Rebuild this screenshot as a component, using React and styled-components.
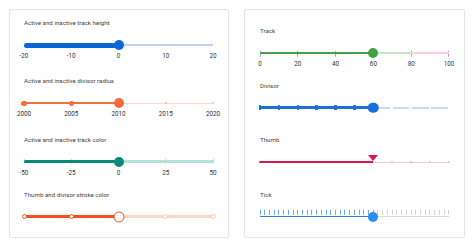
import React from 'react';
import styled, { createGlobalStyle } from 'styled-components';

const Global = createGlobalStyle`
  html, body { margin: 0; padding: 0; background: #fff; }
  body { font-family: Roboto, "Noto Sans", sans-serif; }
`;

const Page = styled.div`
  display: flex;
  gap: 15px;
  padding: 9px;
  width: 474px;
  height: 248px;
  box-sizing: border-box;
`;

const Card = styled.div`
  box-sizing: border-box;
  width: ${p => p.$w}px;
  height: 229px;
  border: 1px solid #e4e4e4;
  border-radius: 2px;
  background: #fff;
  padding: ${p => p.$pt}px 15px 0 ${p => p.$pl}px;
  display: flex;
  flex-direction: column;
`;

const Section = styled.section`
  flex: none;
  height: ${p => (p.$h ? `${p.$h}px` : 'auto')};
  display: flex;
  flex-direction: column;
`;

const Title = styled.div`
  height: 10px;
  line-height: 10px;
  font-size: 6.2px;
  color: #444;
  white-space: nowrap;
`;

/* The slider rail: tracks laid out in a flex row */
const Rail = styled.div`
  position: relative;
  isolation: isolate;
  height: 18px;
  margin-top: 8px;
  display: flex;
  align-items: center;
`;

const ActiveTrack = styled.div`
  flex: 0 0 ${p => p.$pct}%;
  height: ${p => p.$h}px;
  background: ${p => p.$color};
  border-radius: ${p => (p.$round ? `${p.$h / 2}px 0 0 ${p.$h / 2}px` : '0')};
`;

const InactiveTrack = styled.div`
  flex: 1 1 0;
  height: ${p => p.$h}px;
  background: ${p => p.$color || 'transparent'};
  display: flex;
  gap: ${p => p.$gap || 0}px;
  padding-right: ${p => p.$endGap || 0}px;
`;

const Segment = styled.div`
  flex: 1 1 0;
  background: ${p => p.$color};
`;

/* Row of marks (divisors / ticks) spread evenly over the rail */
const MarkRow = styled.div`
  position: absolute;
  inset: 0;
  z-index: ${p => (p.$behind ? -1 : 0)};
  display: flex;
  justify-content: space-between;
  align-items: center;
`;

const Mark = styled.span`
  width: 0;
  display: flex;
  justify-content: center;
  align-items: center;
`;

const Dot = styled.span`
  flex: none;
  width: ${p => p.$size}px;
  height: ${p => p.$size}px;
  box-sizing: border-box;
  border-radius: 50%;
  background: ${p => p.$color};
  border: ${p => (p.$ring ? `1.2px solid ${p.$ring}` : 'none')};
`;

const Pip = styled.span`
  flex: none;
  width: 2.5px;
  height: 5px;
  border-radius: 0.6px;
  background: ${p => p.$color};
`;

const Notch = styled.span`
  flex: none;
  width: 1px;
  height: ${p => p.$h}px;
  background: ${p => p.$color};
  transform: translateY(${p => p.$dy || 0}px);
`;

/* Thumb lies over the track */
const Thumb = styled.div`
  position: absolute;
  top: 50%;
  left: ${p => p.$at}%;
  width: ${p => p.$size}px;
  height: ${p => p.$size}px;
  transform: translate(-50%, -50%);
  box-sizing: border-box;
  border-radius: 50%;
  background: ${p => p.$color};
  border: ${p => (p.$ring ? `${p.$ringW || 1.5}px solid ${p.$ring}` : 'none')};
`;

const Pointer = styled.div`
  position: absolute;
  top: 1.8px;
  left: ${p => p.$at}%;
  width: 0;
  height: 0;
  transform: translateX(-50%);
  border-left: 5px solid transparent;
  border-right: 5px solid transparent;
  border-top: 6.6px solid ${p => p.$color};
`;

const Scale = styled.div`
  height: 7px;
  margin-top: -1px;
  display: flex;
  justify-content: space-between;
`;

const ScaleLabel = styled.span`
  width: 0;
  display: flex;
  justify-content: center;
  font-size: 6.3px;
  line-height: 7px;
  color: #333;
  white-space: nowrap;
`;

const range = (from, to, step) => {
  const out = [];
  for (let v = from; v <= to + 1e-9; v += step) out.push(+v.toFixed(3));
  return out;
};

function Labels({ values }) {
  return (
    <Scale>
      {values.map(v => (
        <ScaleLabel key={v}>{v}</ScaleLabel>
      ))}
    </Scale>
  );
}

export default function App() {
  return (
    <>
      <Global />
      <Page>
        <Card $w={220} $pt={8} $pl={14}>
          <Section $h={58.3}>
            <Title>Active and inactive track height</Title>
            <Rail>
              <ActiveTrack $pct={50} $h={5} $color="#0b66d6" $round />
              <InactiveTrack $h={2} $color="#bcd3f3" />
              <Thumb $at={50} $size={10} $color="#0b66d6" />
            </Rail>
            <Labels values={[-20, -10, 0, 10, 20]} />
          </Section>

          <Section $h={58.4}>
            <Title>Active and inactive divisor radius</Title>
            <Rail>
              <ActiveTrack $pct={50} $h={2} $color="#f2703f" />
              <InactiveTrack $h={1.5} $color="#fbdccf" />
              <MarkRow>
                {[0, 1, 2, 3, 4].map(i => (
                  <Mark key={i}>
                    {i < 2 && <Dot $size={5.5} $color="#f2703f" />}
                    {i > 2 && <Dot $size={2} $color="#f6bca6" />}
                  </Mark>
                ))}
              </MarkRow>
              <Thumb $at={50} $size={10} $color="#f26b3d" />
            </Rail>
            <Labels values={[2000, 2005, 2010, 2015, 2020]} />
          </Section>

          <Section $h={55}>
            <Title>Active and inactive track color</Title>
            <Rail>
              <MarkRow $behind>
                {[0, 1, 2, 3, 4].map(i => (
                  <Mark key={i}><Notch $h={5} $color="#b6dfda" /></Mark>
                ))}
              </MarkRow>
              <ActiveTrack $pct={50} $h={3} $color="#0a8a78" $round />
              <InactiveTrack $h={3} $color="#b6dfda" />
              <Thumb $at={50} $size={10} $color="#0a8a78" />
            </Rail>
            <Labels values={[-50, -25, 0, 25, 50]} />
          </Section>

          <Section>
            <Title>Thumb and divisor stroke color</Title>
            <Rail>
              <ActiveTrack $pct={50} $h={3} $color="#f0521f" />
              <InactiveTrack $h={3} $color="#fdd6c8" />
              <MarkRow>
                {[0, 1, 2, 3, 4].map(i => (
                  <Mark key={i}>
                    {i !== 2 && <Dot $size={5} $color="#fff" $ring={i < 2 ? '#f0521f' : '#fcc9b6'} />}
                  </Mark>
                ))}
              </MarkRow>
              <Thumb $at={50} $size={11} $color="#fff" $ring="#f0521f" $ringW={1.6} />
            </Rail>
          </Section>
        </Card>

        <Card $w={221} $pt={16} $pl={15}>
          <Section $h={54.5}>
            <Title>Track</Title>
            <Rail>
              <MarkRow $behind>
                {range(0, 100, 20).map(v => (
                  <Mark key={v}><Notch $h={5.5} $dy={0.75} $color="#a8a8a8" /></Mark>
                ))}
              </MarkRow>
              <ActiveTrack $pct={60} $h={2.5} $color="#43a047" $round />
              <InactiveTrack $h={2}>
                <Segment $color="#c5e6c6" />
                <Segment $color="#ffcdd4" />
              </InactiveTrack>
              <Thumb $at={60} $size={10} $color="#43a047" />
            </Rail>
            <Labels values={[0, 20, 40, 60, 80, 100]} />
          </Section>

          <Section $h={54.5}>
            <Title>Divisor</Title>
            <Rail>
              <ActiveTrack $pct={60} $h={2.5} $color="#1a6fdc" />
              <InactiveTrack $h={2} $gap={2.6} $endGap={1.3}>
                {[0, 1, 2, 3].map(i => <Segment key={i} $color="#c7dbf6" />)}
              </InactiveTrack>
              <MarkRow>
                {range(0, 100, 10).map(v => (
                  <Mark key={v}>{v <= 60 && <Pip $color="#1a6fdc" />}</Mark>
                ))}
              </MarkRow>
              <Thumb $at={60} $size={10.5} $color="#1a6fdc" />
            </Rail>
          </Section>

          <Section $h={54.5}>
            <Title>Thumb</Title>
            <Rail>
              <ActiveTrack $pct={60} $h={1.5} $color="#dc1747" />
              <InactiveTrack $h={1} $color="#f7c9d4" />
              <MarkRow>
                {range(0, 100, 10).map(v => (
                  <Mark key={v}>
                    {v < 60 && <Dot $size={2.5} $color="#dc1747" />}
                    {v > 60 && <Dot $size={2} $color="#f5b8c7" />}
                  </Mark>
                ))}
              </MarkRow>
              <Pointer $at={60} $color="#e0154a" />
            </Rail>
          </Section>

          <Section>
            <Title>Tick</Title>
            <Rail>
              <MarkRow>
                {range(0, 100, 2.5).map(v => (
                  <Mark key={v}>
                    <Notch $h={4.4} $dy={-4.2} $color={v <= 60 ? '#6aa8ea' : '#d3d3d3'} />
                  </Mark>
                ))}
              </MarkRow>
              <ActiveTrack $pct={60} $h={1.5} $color="#2a83e0" />
              <InactiveTrack $h={1.5} $color="#dadada" />
              <Thumb $at={60} $size={10} $color="#2a8ef0" />
            </Rail>
          </Section>
        </Card>
      </Page>
    </>
  );
}
